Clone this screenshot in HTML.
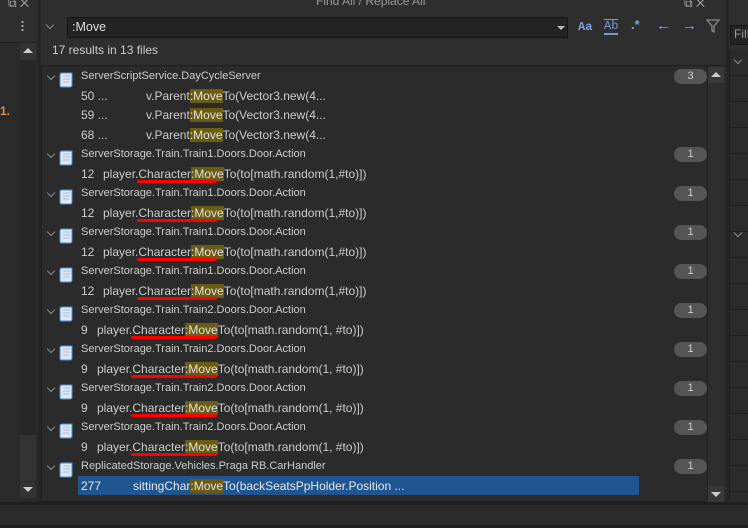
<!DOCTYPE html>
<html><head><meta charset="utf-8"><style>
*{margin:0;padding:0;box-sizing:border-box}
body{width:748px;height:528px;background:#2e2e2e;position:relative;overflow:hidden;font-family:"Liberation Sans",sans-serif;font-size:12px;color:#cccccc}
.a{position:absolute;white-space:nowrap}
.hl{background:#6b5c14;color:#e0e0e0}
.red{position:absolute;height:3px;background:#ff0000;border-radius:2px}
.chev{position:absolute;width:6px;height:6px;border-right:1.2px solid #8a8a8a;border-bottom:1.2px solid #8a8a8a;transform:rotate(45deg)}
.ic{position:absolute;width:13px;height:15px}
.badge{position:absolute;left:674px;width:33px;height:15px;border-radius:8px;background:#555;color:#ccc;text-align:center;font-size:11px;line-height:15px}
.ht{font-size:11px}
</style></head><body>
<div class="a" style="left:316px;top:-6px;color:#999;font-size:12px">Find All / Replace All</div>
<div class="a" style="left:8px;top:-4px;color:#aaa">⧉ ✕</div>
<div class="a" style="left:684px;top:-4px;color:#aaa">⧉ ✕</div>
<div class="a" style="left:0;top:42px;width:38px;height:460px;background:#2a2a2a;border-top:1px solid #222"></div>
<div class="a" style="left:21px;top:20px;width:3px;height:12px;background:radial-gradient(circle,#aaa 1px,transparent 1.3px) 0 0/3px 4px"></div>
<div class="a" style="left:20px;top:43px;width:16px;height:455px;background:#262626"></div>
<div class="a" style="left:20px;top:43px;width:16px;height:17px;background:#333"></div>
<div class="a" style="left:23px;top:48px;border-left:5px solid transparent;border-right:5px solid transparent;border-bottom:5px solid #ccc"></div>
<div class="a" style="left:20px;top:435px;width:16px;height:46px;background:#333"></div>
<div class="a" style="left:20px;top:482px;width:16px;height:16px;background:#333"></div>
<div class="a" style="left:23px;top:487px;border-left:5px solid transparent;border-right:5px solid transparent;border-top:5px solid #ccc"></div>
<div class="a" style="left:0;top:104px;color:#e08a3c;font-weight:bold">1.</div>
<div class="a" style="left:38px;top:0;width:3px;height:502px;background:#252525"></div>
<div class="chev" style="left:47px;top:22px"></div>
<div class="a" style="left:67px;top:17px;width:501px;height:21px;background:#232323;border:1px solid #151515"></div>
<div class="a" style="left:72px;top:20px;font-size:12.5px;color:#ddd">:Move</div>
<div class="a" style="left:557px;top:26px;border-left:4px solid transparent;border-right:4px solid transparent;border-top:4px solid #bbb"></div>
<div class="a" style="left:578px;top:20px;color:#7aa2e0;font-weight:bold;font-family:'Liberation Mono',monospace;font-size:12px">Aa</div>
<div class="a" style="left:604px;top:19px;color:#7a98c8;font-family:'Liberation Mono',monospace;font-size:12px;border-top:1px solid #7a98c8;border-bottom:2px solid #7a98c8;line-height:13px">Ab</div>
<div class="a" style="left:631px;top:17px;color:#7aa2e0;font-weight:bold;font-size:13px">.*</div>
<div class="a" style="left:656px;top:17px;color:#7aa2e0;font-size:15px">←</div>
<div class="a" style="left:682px;top:17px;color:#7aa2e0;font-size:15px">→</div>
<svg class="a" style="left:706px;top:19px" width="14" height="14"><path d="M1 1H13L8 7V13L6 12V7Z" fill="none" stroke="#888" stroke-width="1.3"/></svg>
<div class="a" style="left:52px;top:43px;color:#ccc">17 results in 13 files</div>
<div class="a" style="left:41px;top:65px;width:686px;height:437px;background:#2b2b2b;border:1px solid #1e1e1e"></div>
<div class="a" style="left:707px;top:66px;width:17px;height:436px;background:#2e2e2e;border-left:1px solid #222"></div>
<div class="a" style="left:708px;top:67px;width:16px;height:16px;background:#383838"></div>
<div class="a" style="left:711px;top:72px;border-left:5px solid transparent;border-right:5px solid transparent;border-bottom:5px solid #ccc"></div>
<div class="a" style="left:708px;top:486px;width:16px;height:16px;background:#383838"></div>
<div class="a" style="left:711px;top:492px;border-left:5px solid transparent;border-right:5px solid transparent;border-top:5px solid #ccc"></div>
<div class="a" style="left:726px;top:0;width:3px;height:502px;background:#252525"></div>
<div class="a" style="left:730px;top:25px;width:20px;height:20px;background:#232323;border:1px solid #151515"></div>
<div class="a" style="left:734px;top:27px;color:#999">Filt</div>
<div class="a" style="left:729px;top:50px;width:20px;height:450px;background:#2b2b2b;border-left:1px solid #1e1e1e;background-image:repeating-linear-gradient(#2b2b2b 0 25px,#1f1f1f 25px 26px)"></div>
<div class="chev" style="left:735px;top:57px"></div>
<div class="chev" style="left:735px;top:230px"></div>
<div class="a" style="left:0;top:502px;width:748px;height:3px;background:#1f1f1f"></div>
<div class="a" style="left:0;top:505px;width:748px;height:20px;background:#2b2b2b"></div>
<div class="a" style="left:0;top:525px;width:748px;height:3px;background:#1f1f1f"></div>
<div class="a" style="left:78px;top:476px;width:561px;height:19px;background:#1f5590"></div>
<div id="rows"></div>
<script>
var svgIcon='<svg width="14" height="16" viewBox="0 0 14 16"><path d="M3 1H13V13Q13 15 11 15H2Q1 15 1 13V3Q1 1 3 1Z" fill="#dfe8f4" stroke="#4a90d8" stroke-width="1"/><path d="M4 4H11M4 7H11M4 10H10" stroke="#8ab0e0" stroke-width="0.8"/></svg>';
var h='';
function head(y,t,n){h+='<div class="chev" style="left:48px;top:'+(y-3)+'px"></div><div class="ic" style="left:59px;top:'+(y-4)+'px">'+svgIcon+'</div><div class="a ht" style="left:81px;top:'+(y-6)+'px">'+t+'</div><div class="badge" style="top:'+(y-7)+'px">'+n+'</div>';}
function line(y,html){h+='<div class="a" style="top:'+(y-7)+'px;left:0">'+html+'</div>';}
head(76,'ServerScriptService.DayCycleServer',3);
[[96,'50'],[115,'59'],[135,'68']].forEach(function(r){line(r[0],'<span class="a" style="left:81px">'+r[1]+' ...</span><span class="a" style="left:146px">v.Parent<span class="hl">:Move</span>To(Vector3.new(4...</span>');});
var ys=[154,193,232,271,310,349,388,427];
ys.forEach(function(y,i){
 var t1=i<4;
 head(y,'ServerStorage.Train.Train'+(t1?1:2)+'.Doors.Door.Action',1);
 var ly=y+20;
 var num=t1?'12':'9', x0=t1?103:97;
 line(ly,'<span class="a" style="left:81px">'+num+'</span><span class="a" style="left:'+x0+'px">player.Character<span class="hl">:Move</span>To(to[math.random(1,'+(t1?'':' ')+'#to)])</span>');
 h+='<div class="red" style="left:'+(x0+34)+'px;top:'+(ly+6)+'px;width:'+(t1?80:86)+'px"></div>';
});
head(466,'ReplicatedStorage.Vehicles.Praga RB.CarHandler',1);
line(486,'<span class="a" style="left:81px;color:#e8e8e8">277</span><span class="a" style="left:133px;color:#e8e8e8">sittingChar<span class="hl">:Move</span>To(backSeatsPpHolder.Position ...</span>');
document.getElementById('rows').innerHTML=h;
</script>
</body></html>
